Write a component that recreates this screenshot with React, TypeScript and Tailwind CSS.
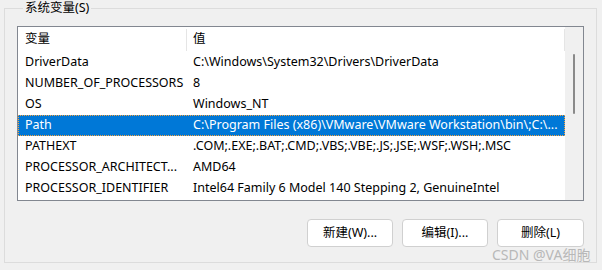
import React from 'react';

const rows: { name: string; value: string }[] = [
  { name: 'DriverData', value: 'C:\\Windows\\System32\\Drivers\\DriverData' },
  { name: 'NUMBER_OF_PROCESSORS', value: '8' },
  { name: 'OS', value: 'Windows_NT' },
  { name: 'Path', value: 'C:\\Program Files (x86)\\VMware\\VMware Workstation\\bin\\;C:\\...' },
  { name: 'PATHEXT', value: '.COM;.EXE;.BAT;.CMD;.VBS;.VBE;.JS;.JSE;.WSF;.WSH;.MSC' },
  { name: 'PROCESSOR_ARCHITECT...', value: 'AMD64' },
  { name: 'PROCESSOR_IDENTIFIER', value: 'Intel64 Family 6 Model 140 Stepping 2, GenuineIntel' },
];

const SELECTED = 3;

const WinButton: React.FC<{ label: string; className?: string }> = ({ label, className = '' }) => (
  <button
    className={`h-[28px] rounded-[4px] border border-[#d0d0d0] bg-white text-[12.5px] text-black flex items-center justify-center ${className}`}
  >
    {label}
  </button>
);

export default function App() {
  return (
    <div className="relative w-[602px] h-[270px] bg-[#f0f0f0] font-['Noto_Sans','Noto_Sans_CJK_SC',sans-serif] text-[12.5px] text-black overflow-hidden">
      <fieldset className="ml-[4px] w-[592px] h-[263px] border border-[#dcdcdc] px-[12px]">
        <legend className="ml-[6px] px-[2px] leading-[16px] text-[12.5px]">系统变量(S)</legend>

        {/* list view */}
        <div className="mt-[10px] w-[567px] h-[175px] border border-[#828790] bg-white flex">
          <div className="w-[547px] flex flex-col">
            <div className="h-[25px] flex items-center">
              <div className="w-[168px] h-full flex items-center pl-[7px]">变量</div>
              <div className="w-px h-[22px] bg-[#e5e5e5]" />
              <div className="flex-1 h-full flex items-center pl-[6px]">值</div>
              <div className="w-px h-[22px] bg-[#e5e5e5]" />
            </div>
            {rows.map((r, i) => {
              const sel = i === SELECTED;
              return (
                <div
                  key={r.name}
                  className={`h-[21px] flex items-center whitespace-nowrap ${
                    sel ? 'bg-[#0078d7] text-white outline outline-1 outline-dotted outline-[#f5a340] -outline-offset-1' : ''
                  }`}
                >
                  <div className="w-[169px] pl-[7px] overflow-hidden">{r.name}</div>
                  <div className="flex-1 pl-[6px] overflow-hidden">{r.value}</div>
                </div>
              );
            })}
          </div>
          {/* scrollbar */}
          <div className="w-[18px] h-full bg-[#f0f0f0] pt-[27px] pl-[8px]">
            <div className="w-[2px] h-[60px] bg-[#8a8a8a] rounded-full" />
          </div>
        </div>

        <div className="mt-[18px] flex justify-end gap-[9px]">
          <WinButton label="新建(W)..." className="w-[86px]" />
          <WinButton label="编辑(I)..." className="w-[86px]" />
          <WinButton label="删除(L)" className="w-[87px]" />
        </div>
      </fieldset>

      <div className="absolute left-[492px] top-[246px] text-[14px] leading-[18px] text-[#b8b8b8] font-['Noto_Sans','Noto_Sans_CJK_SC',sans-serif]">
        CSDN @VA细胞
      </div>
    </div>
  );
}
